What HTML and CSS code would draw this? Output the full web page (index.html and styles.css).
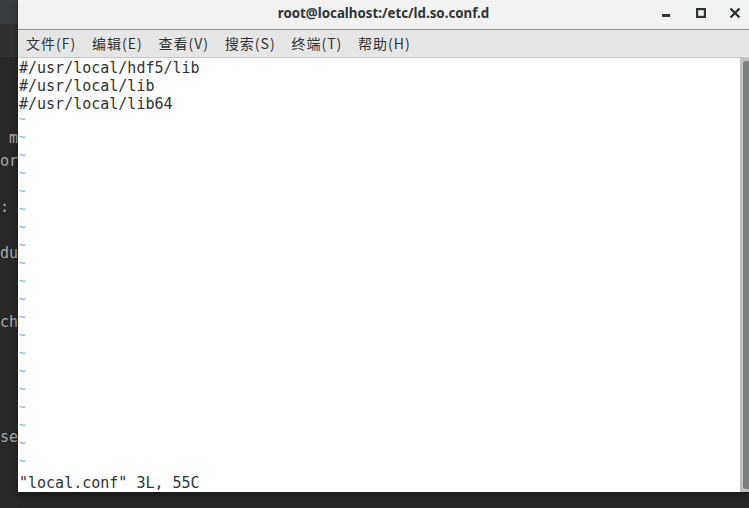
FILE: index.html
```html
<!DOCTYPE html>
<html>
<head>
<meta charset="utf-8">
<link rel="stylesheet" href="styles.css">
</head>
<body>
<div class="desktop">
  <div class="behind">
    <div class="behind-head"></div>
    <div class="behind-band"></div>
    <div class="behind-term">
      <div class="bline"><span>m</span></div>
      <div class="bline"><span>or</span></div>
      <div class="bline"></div>
      <div class="bline"><span>: </span></div>
      <div class="bline"></div>
      <div class="bline"><span>du</span></div>
      <div class="bline"></div>
      <div class="bline"></div>
      <div class="bline"><span>ch</span></div>
      <div class="bline"></div>
      <div class="bline"></div>
      <div class="bline"></div>
      <div class="bline"></div>
      <div class="bline"><span>se</span></div>
    </div>
  </div>
  <div class="window">
    <div class="titlebar">
      <div class="tb-left"></div>
      <div class="title">root@localhost:/etc/ld.so.conf.d</div>
      <div class="controls">
        <span class="ctl">
          <svg width="20" height="20" viewBox="0 0 20 20"><rect x="6" y="12" width="8" height="3" fill="#2e3436"/></svg>
        </span>
        <span class="ctl">
          <svg width="20" height="20" viewBox="0 0 20 20"><rect x="6.1" y="7.1" width="7.8" height="7.8" fill="none" stroke="#2e3436" stroke-width="2.2"/></svg>
        </span>
        <span class="ctl">
          <svg width="20" height="20" viewBox="0 0 20 20"><path d="M5.5 6.5 L14.5 15.5 M14.5 6.5 L5.5 15.5" stroke="#2e3436" stroke-width="2.4" fill="none"/></svg>
        </span>
      </div>
    </div>
    <div class="menubar">
      <span class="mi">文件(F)</span>
      <span class="mi">编辑(E)</span>
      <span class="mi">查看(V)</span>
      <span class="mi">搜索(S)</span>
      <span class="mi">终端(T)</span>
      <span class="mi">帮助(H)</span>
    </div>
    <div class="content">
      <div class="screen">
        <div class="line">#/usr/local/hdf5/lib</div>
        <div class="line">#/usr/local/lib</div>
        <div class="line">#/usr/local/lib64</div>
        <div class="line tilde">~</div>
        <div class="line tilde">~</div>
        <div class="line tilde">~</div>
        <div class="line tilde">~</div>
        <div class="line tilde">~</div>
        <div class="line tilde">~</div>
        <div class="line tilde">~</div>
        <div class="line tilde">~</div>
        <div class="line tilde">~</div>
        <div class="line tilde">~</div>
        <div class="line tilde">~</div>
        <div class="line tilde">~</div>
        <div class="line tilde">~</div>
        <div class="line tilde">~</div>
        <div class="line tilde">~</div>
        <div class="line tilde">~</div>
        <div class="line tilde">~</div>
        <div class="line tilde">~</div>
        <div class="line tilde">~</div>
        <div class="line tilde">~</div>
        <div class="line status">"local.conf" 3L, 55C</div>
      </div>
      <div class="scrollbar"><div class="thumb"></div></div>
    </div>
  </div>
</div>
</body>
</html>
```

FILE: styles.css
```css
html, body {
  margin: 0;
  padding: 0;
}
body {
  width: 749px;
  height: 508px;
  overflow: hidden;
  background: #262626;
}
.desktop {
  display: flex;
  align-items: flex-start;
  width: 749px;
  height: 508px;
  background: #262626;
}
.behind {
  width: 18px;
  flex: none;
  height: 508px;
  display: flex;
  flex-direction: column;
  background: #282828;
}
.behind-head {
  height: 24px;
  background: #3a3d3f;
  flex: none;
}
.behind-band {
  height: 33px;
  background: #2f3133;
  flex: none;
}
.behind-term {
  padding-top: 70px;
  display: flex;
  flex-direction: column;
}
.bline {
  height: 23px;
  line-height: 23px;
  display: flex;
  justify-content: flex-end;
  overflow: hidden;
  white-space: pre;
  font-family: "DejaVu Sans Mono", monospace;
  font-size: 15px;
  color: #a8a8a8;
}
.bline span {
  flex: none;
}
.window {
  flex: none;
  width: 731px;
  height: 492px;
  display: flex;
  flex-direction: column;
  background: #ffffff;
  box-shadow: 0 2px 6px rgba(0,0,0,0.5);
}
.titlebar {
  height: 24px;
  padding-bottom: 5px;
  background: #f2f2f2;
  border-bottom: 1px solid #929292;
  display: grid;
  grid-template-columns: 1fr auto 1fr;
  align-items: center;
  flex: none;
}
.title {
  font-family: "Noto Sans", "DejaVu Sans", sans-serif;
  font-weight: bold;
  font-size: 13.3px;
  color: #2e3436;
  white-space: nowrap;
  padding-top: 1px;
}
.controls {
  display: flex;
  justify-content: flex-end;
  gap: 14.5px;
  padding-right: 4px;
}
.ctl {
  width: 20px;
  height: 20px;
  display: block;
}
.ctl svg {
  display: block;
}
.menubar {
  height: 25px;
  padding-bottom: 2px;
  background: #e6e6e6;
  border-bottom: 1px solid #c8c8c8;
  display: flex;
  align-items: center;
  flex: none;
}
.mi {
  font-family: "Noto Sans CJK SC", "Noto Sans", sans-serif;
  font-size: 14px;
  letter-spacing: 1px;
  color: #2e3436;
  padding: 0 7.8px 0 8px;
  white-space: nowrap;
}
.content {
  flex: 1;
  display: flex;
  min-height: 0;
}
.screen {
  flex: 1;
  padding-top: 1px;
  padding-left: 1px;
  font-family: "DejaVu Sans Mono", monospace;
  font-size: 15px;
  color: #2e3436;
  background: #ffffff;
  overflow: hidden;
}
.line {
  height: 18px;
  line-height: 18px;
  white-space: pre;
}
.tilde {
  color: #729fcf;
  font-size: 11px;
  line-height: 13px;
}
.status {
  margin-top: 1px;
}
.scrollbar {
  width: 9px;
  flex: none;
  background: #bfbfbf;
  display: flex;
  justify-content: flex-end;
  padding-top: 3px;
  padding-bottom: 3px;
}
.thumb {
  width: 6px;
  height: 100%;
  background: #7c7f80;
  border-radius: 3px 0 0 3px;
}
```
